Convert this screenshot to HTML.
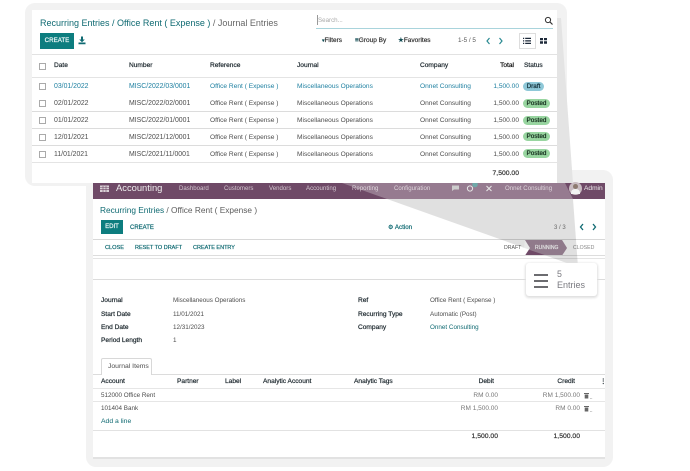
<!DOCTYPE html>
<html><head><meta charset="utf-8">
<style>
html,body{margin:0;padding:0;background:#fff}
#p{position:relative;width:690px;height:471px;overflow:hidden;background:#fff;font-family:"Liberation Sans",sans-serif;font-size:6.6px;color:#4c4c4c;filter:blur(.25px)}
#p div{position:absolute;white-space:nowrap}
.t{line-height:10px;height:10px}
.l{background:#dcdcdc;height:1px}
.m{-webkit-text-stroke:.2px currentColor}
.b{color:#1f2a30;font-size:6.6px;-webkit-text-stroke:.22px currentColor}
.c{color:#1d7fa0}
.g{color:#0f6a72}
.r{text-align:right}
.n{font-size:6.9px}
.nv{color:#d3c8d0;font-size:6.1px;top:184px}
.bd{border-radius:5px;height:9px;line-height:9px;text-align:center;font-size:6.4px;color:#16301f;-webkit-text-stroke:.25px currentColor}
.f{font-size:6.3px}
.cb{width:5px;height:5px;border:1px solid #aaa;left:39px}
</style></head><body>
<div id="p">
<!-- lower window -->
<div style="left:86px;top:170px;width:527px;height:297px;background:#f2f2f2;border-radius:10px"></div>
<div style="left:93px;top:183px;width:512px;height:274px;background:#fff;box-shadow:0 2px 0 #e2e2e2"></div>
<div style="left:93px;top:183px;width:512px;height:16px;background:#6f4a67"></div>
<svg style="position:absolute;left:100px;top:185px" width="10" height="8"><path d="M0 0.5h9v6.5h-9z" fill="#d9d0d6"/><path d="M0 2.5h9M0 4.7h9M3 1v6M6 1v6" stroke="#6f4a67" stroke-width=".6"/></svg>
<div class="t" style="left:116px;top:183px;font-size:9.4px;line-height:10px;color:#eee">Accounting</div>
<div class="t nv" style="left:179px">Dashboard</div>
<div class="t nv" style="left:224px">Customers</div>
<div class="t nv" style="left:269px">Vendors</div>
<div class="t nv" style="left:306px">Accounting</div>
<div class="t nv" style="left:352px">Reporting</div>
<div class="t nv" style="left:394px">Configuration</div>
<div class="t nv" style="left:505px">Onnet Consulting</div>
<div style="left:569px;top:182px;width:13px;height:13px;border-radius:50%;background:#c9bcc2"></div>
<div style="left:573px;top:184px;width:5px;height:5px;border-radius:50%;background:#8d7a70"></div>
<div style="left:571px;top:189px;width:9px;height:5px;border-radius:4px 4px 0 0;background:#f2f2f2"></div>
<div class="t" style="left:584px;top:184px;color:#f0f0f0;font-size:6.6px">Admin</div>
<svg style="position:absolute;left:450px;top:181px" width="48" height="14"><path d="M2 4.500h7v4H4l-2 1.500z" fill="#bbb"/><circle cx="20" cy="7.500" r="2.600" fill="none" stroke="#ddd"/><circle cx="25" cy="3.500" r="2.800" fill="#3a8a8a"/><path d="M36.500 5l5 5M41.500 5l-5 5" stroke="#ddd" stroke-width="1.100"/></svg>

<div class="t" style="left:100px;top:205px;font-size:8.300px;color:#5c5c5c;line-height:11px"><span style="color:#0f6a72">Recurring Entries</span> / Office Rent ( Expense )</div>
<div class="m" style="left:101px;top:220px;width:22px;height:14px;background:#0d7d7f;color:#f2fafa;font-size:6px;line-height:14px;text-align:center">EDIT</div>
<div class="t g m" style="left:130px;top:222.500px;font-size:6px">CREATE</div>
<div class="t g m" style="left:388px;top:222.500px;font-size:6.200px">⚙ Action</div>
<div class="t" style="left:554px;top:222.500px;font-size:6px;color:#777">3 / 3</div>
<svg style="position:absolute;left:578px;top:222px" width="20" height="10"><path d="M5 2L2.500 5L5 8M15 2L17.500 5L15 8" fill="none" stroke="#0f6a72" stroke-width="1.300"/></svg>
<div class="l" style="left:93px;top:239px;width:512px;background:#d8d8d8"></div>
<div class="t g m" style="left:105px;top:243px;font-size:5.600px">CLOSE</div>
<div class="t g m" style="left:135px;top:243px;font-size:5.500px">RESET TO DRAFT</div>
<div class="t g m" style="left:193px;top:243px;font-size:5.500px">CREATE ENTRY</div>
<div class="t" style="left:504px;top:243px;font-size:5.200px;color:#555">DRAFT</div>
<svg style="position:absolute;left:524px;top:240px" width="46" height="16"><path d="M1 0H38L43 8L38 15.500H1L6 8z" fill="#6f4a67"/></svg>
<div class="t m" style="left:535px;top:243px;font-size:5px;color:#eee">RUNNING</div>
<div class="t" style="left:573px;top:243px;font-size:5.200px;color:#888">CLOSED</div>
<div class="l" style="left:93px;top:255px;width:512px;background:#ddd"></div>
<div class="l" style="left:93px;top:258px;width:512px;background:#e4e4e4"></div>
<div class="l" style="left:93px;top:279px;width:512px;background:#dcdcdc"></div>

<div class="t b" style="left:101px;top:296px">Journal</div>
<div class="t f" style="left:173px;top:296px">Miscellaneous Operations</div>
<div class="t b" style="left:101px;top:309.500px">Start Date</div>
<div class="t f" style="left:173px;top:309.500px">11/01/2021</div>
<div class="t b" style="left:101px;top:323px">End Date</div>
<div class="t f" style="left:173px;top:323px">12/31/2023</div>
<div class="t b" style="left:101px;top:336px">Period Length</div>
<div class="t f" style="left:173px;top:336px">1</div>
<div class="t b" style="left:358px;top:296px">Ref</div>
<div class="t f" style="left:430px;top:296px">Office Rent ( Expense )</div>
<div class="t b" style="left:358px;top:309.500px">Recurring Type</div>
<div class="t f" style="left:430px;top:309.500px">Automatic (Post)</div>
<div class="t b" style="left:358px;top:323px">Company</div>
<div class="t g f" style="left:430px;top:323px">Onnet Consulting</div>

<div style="left:101px;top:358px;width:51px;height:17px;border:1px solid #d8d8d8;border-bottom:0;box-sizing:border-box;background:#fff;border-radius:2px 2px 0 0"></div>
<div class="t" style="left:108px;top:362px;font-size:6.800px">Journal Items</div>
<div class="l" style="left:93px;top:374px;width:8px"></div>
<div class="l" style="left:152px;top:374px;width:453px"></div>
<div class="t b" style="left:101px;top:377px">Account</div>
<div class="t b" style="left:177px;top:377px">Partner</div>
<div class="t b" style="left:225px;top:377px">Label</div>
<div class="t b" style="left:263px;top:377px">Analytic Account</div>
<div class="t b" style="left:354px;top:377px">Analytic Tags</div>
<div class="t b r" style="left:444px;width:50px;top:377px">Debit</div>
<div class="t b r" style="left:525px;width:50px;top:377px">Credit</div>
<div class="t b" style="left:600px;top:377px">⋮</div>
<div class="l" style="left:93px;top:388px;width:512px;background:#e6e6e6"></div>
<div class="t" style="left:101px;top:390.500px;font-size:6.300px">512000 Office Rent</div>
<div class="t r" style="left:429px;width:69px;top:390.500px;font-size:6.500px;color:#777">RM 0.00</div>
<div class="t r" style="left:510px;width:70px;top:390.500px;font-size:6.500px;color:#777">RM 1,500.00</div>
<div class="l" style="left:93px;top:401px;width:512px;background:#e6e6e6"></div>
<div class="t" style="left:101px;top:403.500px;font-size:6.300px">101404 Bank</div>
<div class="t r" style="left:429px;width:69px;top:403.500px;font-size:6.500px;color:#777">RM 1,500.00</div>
<div class="t r" style="left:510px;width:70px;top:403.500px;font-size:6.500px;color:#777">RM 0.00</div>
<svg style="position:absolute;left:583px;top:391px" width="10" height="22"><path d="M1 2h5v1H1zM1.700 3.500h3.600v4H1.700zM1 15h5v1H1zM1.700 16.500h3.600v4H1.700z" fill="#666"/><path d="M7 7.500h.6M8.500 7.500h.6M7 20.500h.6M8.500 20.500h.6" stroke="#888" stroke-width=".7"/></svg>
<div class="t g" style="left:101px;top:416.500px;font-size:6.800px">Add a line</div>
<div class="l" style="left:93px;top:430px;width:512px;background:#e2e2e2"></div>
<div class="t r m" style="left:429px;width:69px;top:432px;font-size:6.800px;color:#333">1,500.00</div>
<div class="t r m" style="left:510px;width:70px;top:432px;font-size:6.800px;color:#333">1,500.00</div>

<!-- gray connector -->
<svg style="position:absolute;left:0;top:0" width="690" height="471">
<path d="M387 199L578 267L573 199Z" fill="#000" fill-opacity=".12"/>
<path d="M525 240H562L567 248L562 255.500H546L524 248Z" fill="#fff" fill-opacity=".3"/>
<path d="M342 183L387 199H573L565 183Z" fill="#fff" fill-opacity=".27"/>
</svg>

<!-- entries button -->
<div style="left:526px;top:263px;width:71px;height:33px;background:#fff;border-radius:3px;box-shadow:0 1px 2px 1px #e0e0e0"></div>
<div style="left:534px;top:274px;width:14px;height:2px;background:#6c6c70"></div>
<div style="left:534px;top:280px;width:14px;height:2px;background:#6c6c70"></div>
<div style="left:534px;top:285.500px;width:14px;height:2px;background:#6c6c70"></div>
<div class="t" style="left:557px;top:269px;font-size:8.800px;color:#7a7a80;line-height:10px">5</div>
<div class="t" style="left:557px;top:280px;font-size:9px;color:#7a7a80;line-height:11px">Entries</div>

<!-- top window -->
<div style="left:25px;top:3px;width:542px;height:168px;background:#f2f2f2;border-radius:10px 10px 0 0"></div>
<div style="left:25px;top:160px;width:68px;height:26px;background:#f2f2f2;border-radius:0 0 0 10px"></div>
<svg style="position:absolute;left:0;top:0" width="690" height="471"><path d="M557 18H561L573 183H557Z" fill="#e4e4e4"/></svg>
<div style="left:32px;top:10px;width:525px;height:173px;background:#fff"></div>
<div class="t" style="left:40px;top:16.500px;font-size:9px;color:#666;line-height:12px"><span style="color:#0f6a72">Recurring Entries / Office Rent ( Expense )</span> / Journal Entries</div>
<div style="left:316px;top:28px;width:237px;height:1px;background:#a9d4dc"></div>
<div style="left:317px;top:15px;width:1px;height:10px;background:#999"></div>
<div class="t" style="left:318px;top:15.500px;font-size:6.200px;color:#aaa">Search...</div>
<svg style="position:absolute;left:544px;top:16px" width="10" height="10"><circle cx="4" cy="4" r="2.600" fill="none" stroke="#333" stroke-width="1"/><path d="M6 6L8.500 8.500" stroke="#333" stroke-width="1.200"/></svg>
<div class="m" style="left:40px;top:33px;width:34px;height:16px;background:#0d7d7f;color:#f2fafa;font-size:6.200px;line-height:16px;text-align:center">CREATE</div>
<svg style="position:absolute;left:78px;top:36px" width="9" height="9"><path d="M3 .5h2v3h1.800L4 6.300 1.200 3.500H3zM.5 6.500h7v1.800h-7z" fill="#0f6a72"/></svg>
<div class="t m" style="left:322px;top:36px;font-size:6.400px;color:#333"><span style="font-size:5px;color:#0f4a52">▾</span>Filters</div>
<div class="t m" style="left:355px;top:36px;font-size:6.500px;color:#333"><span style="color:#0f4a52">≡</span>Group By</div>
<div class="t m" style="left:398px;top:36px;font-size:6.500px;color:#333"><span style="color:#0f4a52">★</span>Favorites</div>
<div class="t" style="left:458px;top:36px;font-size:6.300px;color:#555">1-5 / 5</div>
<svg style="position:absolute;left:485px;top:36px" width="20" height="10"><path d="M4.500 2L2 5L4.500 8M14.500 2L17 5L14.500 8" fill="none" stroke="#2a8a92" stroke-width="1.200"/></svg>
<div style="left:519px;top:33px;width:17px;height:16px;border:1px solid #ddd;box-sizing:border-box"></div>
<svg style="position:absolute;left:523px;top:37px" width="30" height="8"><path d="M0 .8h1.200v1.200H0zM0 3.300h1.200v1.200H0zM0 5.800h1.200V7H0zM2.200 .8H8v1.200H2.200zM2.200 3.300H8v1.200H2.200zM2.200 5.800H8V7H2.200zM17 1h3v2.300h-3zM21 1h3v2.300h-3zM17 4.300h3v2.400h-3zM21 4.300h3v2.400h-3z" fill="#1e2a3a"/></svg>
<div class="l" style="left:32px;top:54px;width:525px;background:#e2e2e2"></div>
<div class="cb" style="top:62.500px;width:5px;height:5px"></div>
<div class="t b" style="left:54px;top:61px">Date</div>
<div class="t b" style="left:129px;top:61px">Number</div>
<div class="t b" style="left:210px;top:61px">Reference</div>
<div class="t b" style="left:297px;top:61px">Journal</div>
<div class="t b" style="left:420px;top:61px">Company</div>
<div class="t b r" style="left:470px;width:44px;top:61px;color:#111">Total</div>
<div class="t b" style="left:524px;top:61px">Status</div>
<div class="l" style="left:32px;top:77px;width:525px;background:#e4e4e4"></div>

<div class="cb" style="top:83px"></div>
<div class="t c n" style="left:54px;top:82px">03/01/2022</div>
<div class="t c n" style="left:129px;top:82px">MISC/2022/03/0001</div>
<div class="t c" style="left:210px;top:82px">Office Rent ( Expense )</div>
<div class="t c" style="left:297px;top:82px">Miscellaneous Operations</div>
<div class="t c" style="left:420px;top:82px">Onnet Consulting</div>
<div class="t c r" style="left:470px;width:49px;top:82px">1,500.00</div>
<div class="bd" style="left:523px;top:82px;width:21px;background:#8fc8d8;color:#14323c">Draft</div>

<div class="cb" style="top:100px"></div>
<div class="t n" style="left:54px;top:99px">02/01/2022</div>
<div class="t n" style="left:129px;top:99px">MISC/2022/02/0001</div>
<div class="t" style="left:210px;top:99px">Office Rent ( Expense )</div>
<div class="t" style="left:297px;top:99px">Miscellaneous Operations</div>
<div class="t" style="left:420px;top:99px">Onnet Consulting</div>
<div class="t r" style="left:470px;width:49px;top:99px">1,500.00</div>
<div class="bd" style="left:523px;top:98.700px;width:27px;background:#98d5a0">Posted</div>
<div class="l" style="left:32px;top:111px;width:525px"></div>

<div class="cb" style="top:117px"></div>
<div class="t n" style="left:54px;top:116px">01/01/2022</div>
<div class="t n" style="left:129px;top:116px">MISC/2022/01/0001</div>
<div class="t" style="left:210px;top:116px">Office Rent ( Expense )</div>
<div class="t" style="left:297px;top:116px">Miscellaneous Operations</div>
<div class="t" style="left:420px;top:116px">Onnet Consulting</div>
<div class="t r" style="left:470px;width:49px;top:116px">1,500.00</div>
<div class="bd" style="left:523px;top:115.500px;width:27px;background:#98d5a0">Posted</div>
<div class="l" style="left:32px;top:128px;width:525px"></div>

<div class="cb" style="top:133.500px"></div>
<div class="t n" style="left:54px;top:132.700px">12/01/2021</div>
<div class="t n" style="left:129px;top:132.700px">MISC/2021/12/0001</div>
<div class="t" style="left:210px;top:132.700px">Office Rent ( Expense )</div>
<div class="t" style="left:297px;top:132.700px">Miscellaneous Operations</div>
<div class="t" style="left:420px;top:132.700px">Onnet Consulting</div>
<div class="t r" style="left:470px;width:49px;top:132.700px">1,500.00</div>
<div class="bd" style="left:523px;top:132.200px;width:27px;background:#98d5a0">Posted</div>
<div class="l" style="left:32px;top:145px;width:525px"></div>

<div class="cb" style="top:150.500px"></div>
<div class="t n" style="left:54px;top:149.500px">11/01/2021</div>
<div class="t n" style="left:129px;top:149.500px">MISC/2021/11/0001</div>
<div class="t" style="left:210px;top:149.500px">Office Rent ( Expense )</div>
<div class="t" style="left:297px;top:149.500px">Miscellaneous Operations</div>
<div class="t" style="left:420px;top:149.500px">Onnet Consulting</div>
<div class="t r" style="left:470px;width:49px;top:149.500px">1,500.00</div>
<div class="bd" style="left:523px;top:149px;width:27px;background:#98d5a0">Posted</div>
<div class="l" style="left:32px;top:162px;width:525px;background:#e4e4e4"></div>
<div class="t r m" style="left:470px;width:49px;top:168.500px;font-size:6.800px;color:#333">7,500.00</div>
</div>
</body></html>
